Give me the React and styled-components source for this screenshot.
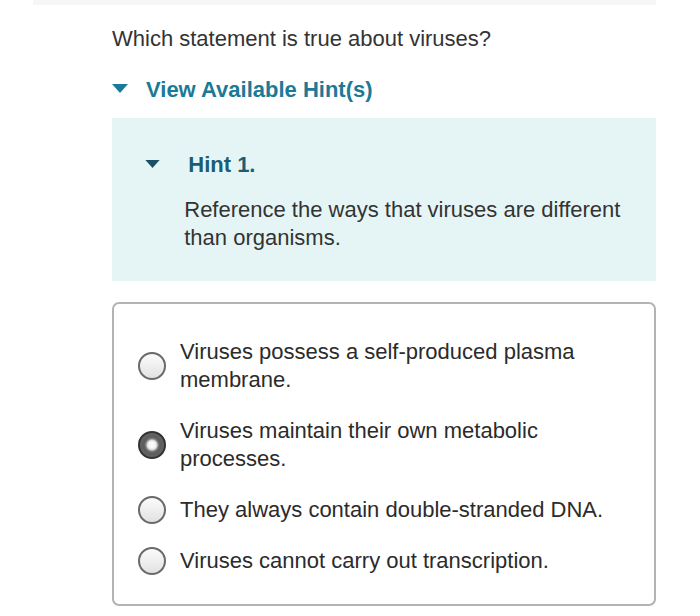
import React from 'react'
import styled, { createGlobalStyle } from 'styled-components'

const options = [
  { id: 1, text: 'Viruses possess a self-produced plasma membrane.', checked: false },
  { id: 2, text: 'Viruses maintain their own metabolic processes.', checked: true },
  { id: 3, text: 'They always contain double-stranded DNA.', checked: false },
  { id: 4, text: 'Viruses cannot carry out transcription.', checked: false },
]

function Caret({ color, width = 16, height = 9 }) {
  return (
    <svg width={width} height={height} viewBox="0 0 16 9">
      <path d="M0 0 L16 0 L8 9 Z" fill={color} />
    </svg>
  )
}

function App() {
  return (
    <Page>
      <GlobalStyle />
      <TopBar />
      <Content>
        <Question>Which statement is true about viruses?</Question>
        <HintToggle>
          <ToggleCaret><Caret color="#1b7a96" /></ToggleCaret>
          View Available Hint(s)
        </HintToggle>
        <HintBox>
          <HintRow>
            <HintCaret><Caret color="#1b4f63" width={15} height={8} /></HintCaret>
            <div>
              <HintTitle>Hint 1.</HintTitle>
              <HintText>Reference the ways that viruses are different than organisms.</HintText>
            </div>
          </HintRow>
        </HintBox>
        <Choices>
          {options.map(o => (
            <Choice key={o.id}>
              <Radio checked={o.checked} />
              <ChoiceText>{o.text}</ChoiceText>
            </Choice>
          ))}
        </Choices>
      </Content>
    </Page>
  )
}

const GlobalStyle = createGlobalStyle`
  body {
    margin: 0;
    background: #ffffff;
    font-family: "Liberation Sans", Arial, Helvetica, sans-serif;
  }
`

const Page = styled.div`
  width: 700px;
  height: 616px;
  overflow: hidden;
`

const TopBar = styled.div`
  margin-left: 33px;
  width: 623px;
  height: 5px;
  background-color: #f6f6f6;
`

const Content = styled.div`
  margin-left: 112px;
  width: 544px;
`

const Question = styled.div`
  margin-top: 22px;
  font-size: 22px;
  line-height: 24px;
  color: #333333;
`

const HintToggle = styled.div`
  display: flex;
  align-items: center;
  margin-top: 27px;
  font-size: 22px;
  line-height: 24px;
  font-weight: bold;
  color: #1b7a96;
`

const ToggleCaret = styled.span`
  display: flex;
  width: 34px;
  margin-top: -3px;
`

const HintBox = styled.div`
  margin-top: 16px;
  height: 163px;
  box-sizing: border-box;
  background-color: #e5f5f6;
  padding: 33px 20px 0 33px;
`

const HintRow = styled.div`
  display: flex;
`

const HintCaret = styled.span`
  display: flex;
  width: 42px;
  padding-top: 9px;
`

const HintTitle = styled.div`
  margin-left: 2px;
  font-size: 22px;
  line-height: 28px;
  font-weight: bold;
  color: #1b5d73;
`

const HintText = styled.div`
  margin-top: 17px;
  margin-left: -2px;
  font-size: 22px;
  line-height: 28px;
  color: #333333;
  max-width: 460px;
`

const Choices = styled.div`
  margin-top: 21px;
  height: 304px;
  box-sizing: border-box;
  border: 2px solid #b3b3b3;
  border-radius: 7px;
  padding: 34px 20px 0 24px;
  display: flex;
  flex-direction: column;
  gap: 23px;
`

const Choice = styled.div`
  display: flex;
  align-items: center;
`

const Radio = styled.span`
  flex: none;
  box-sizing: border-box;
  width: 28px;
  height: 28px;
  border-radius: 50%;
  border: 2px solid ${props => props.checked ? '#333333' : '#6a6a6a'};
  background: ${props => props.checked
    ? 'radial-gradient(circle at 50% 50%, #fafafa 0 3px, #d6d6d6 5px, #8a8a8a 6px, #5c5c5c 8px, #6e6e6e 100%)'
    : 'linear-gradient(#fbfbfb, #e2e2e2)'};
  margin-right: 14px;
`

const ChoiceText = styled.div`
  font-size: 22px;
  line-height: 28px;
  color: #2b2b2b;
  max-width: 440px;
`

export default App
